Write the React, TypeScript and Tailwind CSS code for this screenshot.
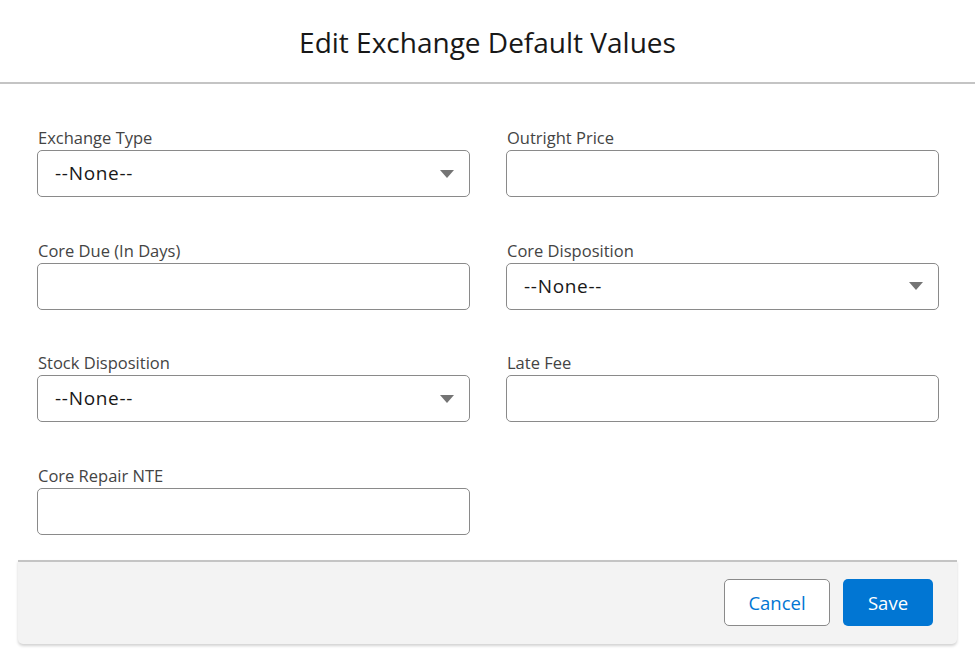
import React from "react";

const font = { fontFamily: '"Open Sans", "Noto Sans", Arial, sans-serif' };

function Arrow() {
  return (
    <svg width="14" height="8" viewBox="0 0 14 8" className="shrink-0">
      <path d="M0 0 L14 0 L7 8 Z" fill="#747474" />
    </svg>
  );
}

function Field({ label, select }: { label: string; select?: boolean }) {
  return (
    <div className="flex flex-col">
      <div className="h-[21px] mb-[1px] text-[16.5px] leading-[19px] text-[#444444] pl-[1px]">{label}</div>
      <div className="h-[47px] rounded-[5px] border border-[#8a8a8a] bg-white flex items-center justify-between pl-[17px] pr-[15px]">
        {select ? (
          <>
            <span className="text-[19px] tracking-[0.7px] text-[#181818]">--None--</span>
            <Arrow />
          </>
        ) : null}
      </div>
    </div>
  );
}

export default function App() {
  return (
    <div className="w-[975px] h-[665px] bg-white overflow-hidden" style={font}>
      <div className="h-[84px] border-b-2 border-[#c4c4c4] flex items-center justify-center">
        <h1 className="text-[28px] text-[#181818] leading-none pt-[2px]">Edit Exchange Default Values</h1>
      </div>
      <div className="pt-[44px] pl-[37px] pr-[36px] grid grid-cols-2 gap-x-[36px] gap-y-[43.5px]">
        <Field label="Exchange Type" select />
        <Field label="Outright Price" />
        <Field label="Core Due (In Days)" />
        <Field label="Core Disposition" select />
        <Field label="Stock Disposition" select />
        <Field label="Late Fee" />
        <Field label="Core Repair NTE" />
      </div>
      <div className="mx-[18px] mt-[25px] h-[84px] border-t-2 border-[#c4c4c4] bg-[#f3f3f3] rounded-b-[5px] shadow-[0_2px_3px_rgba(0,0,0,0.18)] flex items-center justify-end gap-[13px] pr-[24px]">
        <button className="w-[106px] h-[47px] rounded-[5px] border border-[#8a8a8a] bg-white text-[#0176d3] text-[18.5px]">Cancel</button>
        <button className="w-[90px] h-[47px] rounded-[5px] bg-[#0176d3] text-white text-[18.5px]">Save</button>
      </div>
    </div>
  );
}
